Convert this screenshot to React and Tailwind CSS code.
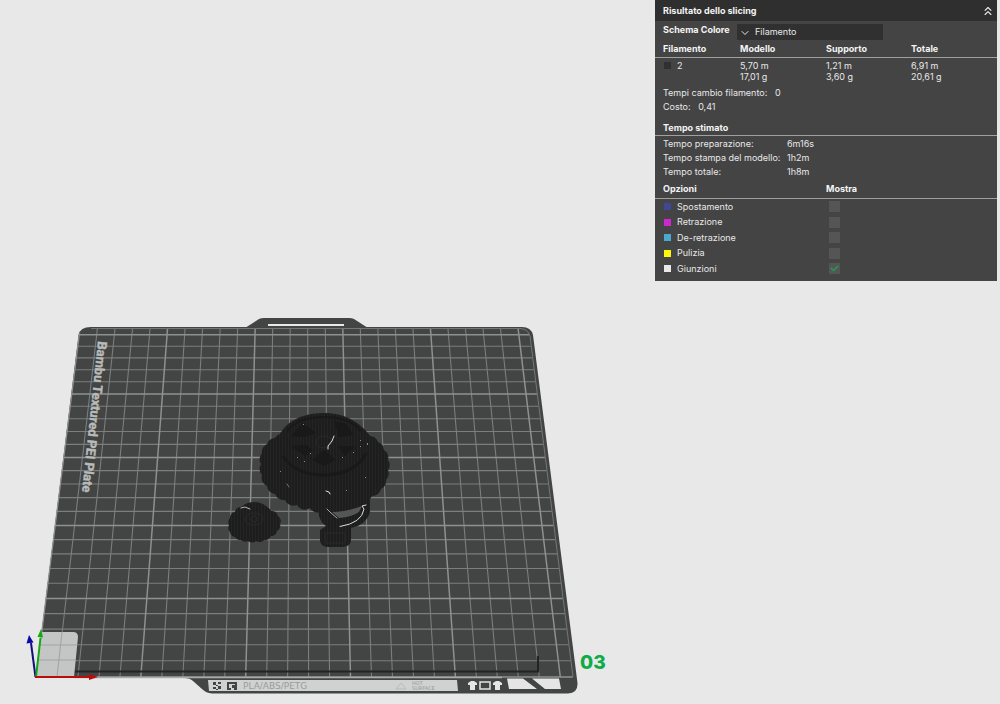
import React, { useState } from 'react';
import { ChevronDown, ChevronsUp } from 'lucide-react';

const SIZE = 25.6;

// bed coordinates (cm) -> screen
function project(u, v) {
  const w = 1 + 0.0077 * v;
  return [(36 + 20.97 * u + 2.336 * v) / w, 677 - (16.33 * v) / w];
}

function line(u1, v1, u2, v2) {
  const [x1, y1] = project(u1, v1);
  const [x2, y2] = project(u2, v2);
  return `M${x1.toFixed(1)} ${y1.toFixed(1)}L${x2.toFixed(1)} ${y2.toFixed(1)}`;
}

function gridPath(major) {
  const parts = [];
  for (let i = 0; i <= 25; i++) {
    if ((i % 5 === 0) !== major) continue;
    parts.push(line(i, 0, i, SIZE));
    parts.push(line(0, i, SIZE, i));
  }
  return parts.join('');
}

const minorGrid = gridPath(false);
const majorGrid = gridPath(true);

// closed outline with a round lobe between each pair of points
function scallop(points, r) {
  const [first, ...rest] = points;
  return `M${first}` + rest.map((p) => `A${r} ${r} 0 0 0 ${p}`).join('') + 'Z';
}

const knob = scallop(
  [
    '284 434', '275 438', '267 444', '262 453', '261 464', '262 475', '267 486', '275 494',
    '285 500', '297 505', '310 508', '324 510', '336 509', '348 506', '360 501', '372 496',
    '381 489', '386 480', '388 470', '388 460', '384 450', '378 442', '370 436', '362 432',
  ],
  9
);

const smallKnob = scallop(
  [
    '241 507', '235 512', '230 518', '229 525', '230 532', '235 537', '241 540', '248 541',
    '256 541', '264 540', '271 536', '277 531', '280 524', '278 516', '271 511', '266 507',
  ],
  6
);

function Models() {
  return (
    <g>
      <g fill="url(#layers)">
        <path d="M317 500L319 516Q321 523 326 526L320 530V541Q321 547 329 547H343Q351 546 351 540V528Q366 525 370 512V498Q346 490 317 500Z" />
        <path d={knob} />
        <path d="M277 440C284 421 303 413 324 413C346 413 362 423 373 440L366 462H283Z" />
        <path d={smallKnob} />
        <path d="M239 510Q244 502 254 502Q265 502 270 511L266 522H242Z" />
      </g>
      <path d="M332 512Q346 512 362 506L359 512Q352 517 339 518Z" fill="#555756" />
      <path d="M283 456Q295 475 325 475Q356 474 366 453" fill="none" stroke="#191919" strokeWidth="3" />
      <path d="M287 431Q298 417 324 417Q350 417 361 431" fill="none" stroke="#191919" strokeWidth="2" />
      <g fill="#191919">
        <path d="M291 436L303 423L316 433L305 437ZM334 421L346 424L354 435L339 437ZM291 446L306 445L313 450L305 456ZM338 446L356 446L345 456ZM312 460L324 450L336 460L324 466Z" />
      </g>
      <g fill="none" stroke="#2a2a2a" strokeWidth="1">
        <path d="M325 533H345V543H326Z" />
        <circle cx="254" cy="519" r="3" />
        <ellipse cx="254" cy="519" rx="9" ry="6" />
        <ellipse cx="324" cy="442" rx="8" ry="6" />
      </g>
      <g fill="none" stroke="#dedede" strokeLinecap="round" strokeLinejoin="round">
        <path d="M334 436L332 441L328 446L328 449" />
        <path d="M326 491L329 492L330 494" />
        <path d="M340 526.500Q362 523 364 509L362 506L366 505" />
        <path d="M327 509L331 513L337 518" stroke="#a5a5a5" />
        <path d="M241 508L245 507L250 509" stroke="#b5b5b5" />
        <path d="M287 484L289 487" stroke="#777" />
      </g>
      <path
        d="M303 424h1v1h-1zM297 457h1v1h-1zM304 461h1v1h-1zM342 457h1v1h-1zM353 452h1v1h-1zM360 440h1v1h-1zM367 443h1v2h-1zM365 477h1v1h-1zM280 471h1v1h-1zM346 490h1v1h-1zM310 453h1v1h-1zM360 446h1v1h-1z"
        fill="#8a8a8a"
      />
    </g>
  );
}

function Plate() {
  return (
    <g>
      <path d="M245 328L259 319Q261 318 264 318H349Q352 318 354 319L368 328Z" fill="#434544" />
      <rect x="268" y="324" width="76" height="2" fill="#e8e8e8" />
      <path
        d="M36 678L78.500 335Q80 327 91 327H522Q531 327 533 335L577.500 683Q578 693 568 693.500H212Q206 693 202 689L193 681Q190 678 184 678Z"
        fill="#434544"
      />
      <g clipPath="url(#bed)" fill="none">
        <path d={minorGrid} stroke="#7b7e7d" strokeWidth="1.100" />
        <path d={majorGrid} stroke="#8e9190" strokeWidth="1.500" />
      </g>
      <path d="M91 328.500H520Q528 329 530 336L573 677" stroke="#747776" fill="none" />

      <path d="M41 632H73Q78 632 78 637L74 677H36Z" fill="#c4c6c5" />
      <path d="M62 632L57 677M39 645H77M38 660H76" stroke="#a1a3a2" fill="none" />
      <path d="M75 671.500H538V656" stroke="#232424" strokeWidth="2" fill="none" />
      <path d="M74 677.500H502" stroke="#a9abaa" strokeWidth="1.500" fill="none" />

      <text
        transform="translate(98 341) rotate(96)"
        fill="#b9bbba"
        stroke="#b9bbba"
        strokeWidth="0.400"
        fontSize="13"
        fontWeight="700"
        fontFamily="Roboto, sans-serif"
      >
        Bambu Textured PEI Plate
      </text>

      <path d="M208 680H457L458 691H209Z" fill="#d0d2d1" />
      <g fill="#434544">
        <path d="M213 682h3v3h-3zM218 682h3v2h-3zM213 687h3v2h-3zM218 686h3v3h-3zM216 685h2v1h-2zM216 689h2v1h-2z" />
        <path d="M227 682h10v3h-2v-1h-6v4h2v2h-4zM232 685h5v5h-3v-2h-2z" />
      </g>
      <text x="243" y="689" fill="#999b9a" fontSize="9" fontFamily="DejaVu Sans, sans-serif">PLA/ABS/PETG</text>
      <g fill="#969897" fontSize="5" fontFamily="DejaVu Sans, sans-serif">
        <text x="412" y="685">HOT</text>
        <text x="412" y="690">SURFACE</text>
      </g>
      <path d="M396 689L401 683L406 689Z" stroke="#b9bbba" fill="none" />
      <g fill="#e4e5e4">
        <path d="M471 681H474L477 683V685H475V690H470V685H468V683ZM496 681H499L502 683V685H500V690H495V685H493V683Z" />
        <path d="M507 678.500H523L537 689H509ZM532 678.500H559L561 689H545Z" />
      </g>
      <rect x="480" y="682" width="10" height="7" stroke="#e4e5e4" strokeWidth="1.500" fill="none" />
    </g>
  );
}

function Axes() {
  return (
    <g strokeWidth="2">
      <path d="M35.500 677L31 643" stroke="#10107e" />
      <path d="M29 635L26.500 643.500L33.500 642.500Z" fill="#0808a8" />
      <path d="M36 677L40.500 638" stroke="#12a812" />
      <path d="M41 629L37.500 637L43 637.500Z" fill="#12a812" />
      <path d="M35 677H90" stroke="#bb0c0c" />
      <path d="M98 677L89 674V680Z" fill="#bb0c0c" />
    </g>
  );
}

function Scene() {
  return (
    <svg
      viewBox="0 0 1000 704"
      preserveAspectRatio="xMinYMax meet"
      className="absolute inset-0 h-full w-full"
      role="img"
      aria-label="Bambu Textured PEI Plate"
    >
      <defs>
        <pattern id="layers" width="3" height="4" patternUnits="userSpaceOnUse">
          <rect width="3" height="4" fill="#1d1d1d" />
          <rect width="1" height="4" fill="#242424" />
        </pattern>
        <clipPath id="bed">
          <path d="M35 678L78.500 336Q80 328 91 328H521Q529 328 531 336L574 678Z" />
        </clipPath>
      </defs>
      <Plate />
      <Models />
      <Axes />
      <text x="580" y="669" fill="#0eab49" fontSize="19" fontWeight="800" fontFamily="Inter, sans-serif">03</text>
    </svg>
  );
}

const times = [
  ['Tempo preparazione:', '6m16s'],
  ['Tempo stampa del modello:', '1h2m'],
  ['Tempo totale:', '1h8m'],
];

const options = [
  { id: 'travel', label: 'Spostamento', color: 'bg-[#404796]' },
  { id: 'retract', label: 'Retrazione', color: 'bg-[#cd28cd]' },
  { id: 'unretract', label: 'De-retrazione', color: 'bg-[#4aa9cc]' },
  { id: 'wipe', label: 'Pulizia', color: 'bg-[#fbf80a]' },
  { id: 'seams', label: 'Giunzioni', color: 'bg-[#e8e8e8]' },
];

function ResultPanel() {
  const [shown, setShown] = useState({ seams: true });
  const toggle = (id) => setShown({ ...shown, [id]: !shown[id] });

  return (
    <aside className="relative w-[342px] bg-[#444444] pb-1 font-['Inter','Liberation_Sans',sans-serif] text-[9px] leading-[14px] text-[#e8e8e8]">
      <header className="flex h-[21px] items-center justify-between bg-[#2f2f2f] pr-[2px] pl-2">
        <h2 className="font-bold text-[#f4f4f4]">Risultato dello slicing</h2>
        <button type="button" aria-label="Comprimi">
          <ChevronsUp size={14} strokeWidth={2} />
        </button>
      </header>

      <div className="flex h-5 items-start pl-2">
        <label htmlFor="scheme" className="w-[74px] pt-[2px] font-bold text-[#f4f4f4]">Schema Colore</label>
        <div className="relative mt-[3px]">
          <select id="scheme" className="h-4 w-[146px] appearance-none bg-[#303030] pl-[18px] leading-4">
            <option>Filamento</option>
          </select>
          <ChevronDown size={12} className="pointer-events-none absolute top-[3px] left-[2px]" />
        </div>
      </div>

      <table className="w-full table-fixed text-left">
        <thead>
          <tr className="h-4 border-b border-[#a0a0a0] text-[#f4f4f4]">
            <th className="w-[85px] pl-2 font-bold">Filamento</th>
            <th className="w-[86px] font-bold">Modello</th>
            <th className="w-[85px] font-bold">Supporto</th>
            <th className="font-bold">Totale</th>
          </tr>
        </thead>
        <tbody className="leading-[11px]">
          <tr className="align-top">
            <td className="pt-[2px] pl-[9px]">
              <span className="flex items-center gap-[6px]">
                <span className="size-[7px] bg-[#303030]" />2
              </span>
            </td>
            <td className="pt-[2px]">5,70 m<br />17,01 g</td>
            <td className="pt-[2px]">1,21 m<br />3,60 g</td>
            <td className="pt-[2px]">6,91 m<br />20,61 g</td>
          </tr>
        </tbody>
      </table>

      <div className="pt-1 pl-2">
        <p>Tempi cambio filamento: &nbsp; 0</p>
        <p>Costo: &nbsp; 0,41</p>
      </div>

      <h3 className="mt-[7px] border-b border-[#a0a0a0] pl-2 font-bold text-[#f4f4f4]">Tempo stimato</h3>
      <dl className="pt-px pl-2">
        {times.map(([label, value]) => (
          <div key={label} className="flex">
            <dt className="w-[124px]">{label}</dt>
            <dd>{value}</dd>
          </div>
        ))}
      </dl>

      <table className="h-[98px] w-full table-fixed text-left">
        <thead>
          <tr className="h-5 border-b border-[#a0a0a0] text-[#f4f4f4]">
            <th className="w-[171px] pt-[2px] pl-2 font-bold">Opzioni</th>
            <th className="pt-[2px] font-bold">Mostra</th>
          </tr>
        </thead>
        <tbody>
          {options.map((o) => (
            <tr key={o.id} className="leading-[14px]">
              <td className="pl-[9px]">
                <label htmlFor={o.id} className="flex items-center gap-[6px]">
                  <span className={`size-[7px] ${o.color}`} />
                  {o.label}
                </label>
              </td>
              <td className="pl-[3px]">
                <span className="relative block size-[11px]">
                  <input
                    id={o.id}
                    type="checkbox"
                    checked={!!shown[o.id]}
                    onChange={() => toggle(o.id)}
                    className="block size-[11px] appearance-none bg-[#555555]"
                  />
                  {shown[o.id] && (
                    <svg viewBox="0 0 11 11" className="pointer-events-none absolute inset-0">
                      <path d="M2 5L4.500 7.500L9 3" fill="none" stroke="#18a34c" strokeWidth="1.500" />
                    </svg>
                  )}
                </span>
              </td>
            </tr>
          ))}
        </tbody>
      </table>
    </aside>
  );
}

export default function App() {
  return (
    <main className="relative flex min-h-screen items-start justify-end overflow-hidden bg-[#e8e8e8] pr-[3px]">
      <Scene />
      <ResultPanel />
    </main>
  );
}
